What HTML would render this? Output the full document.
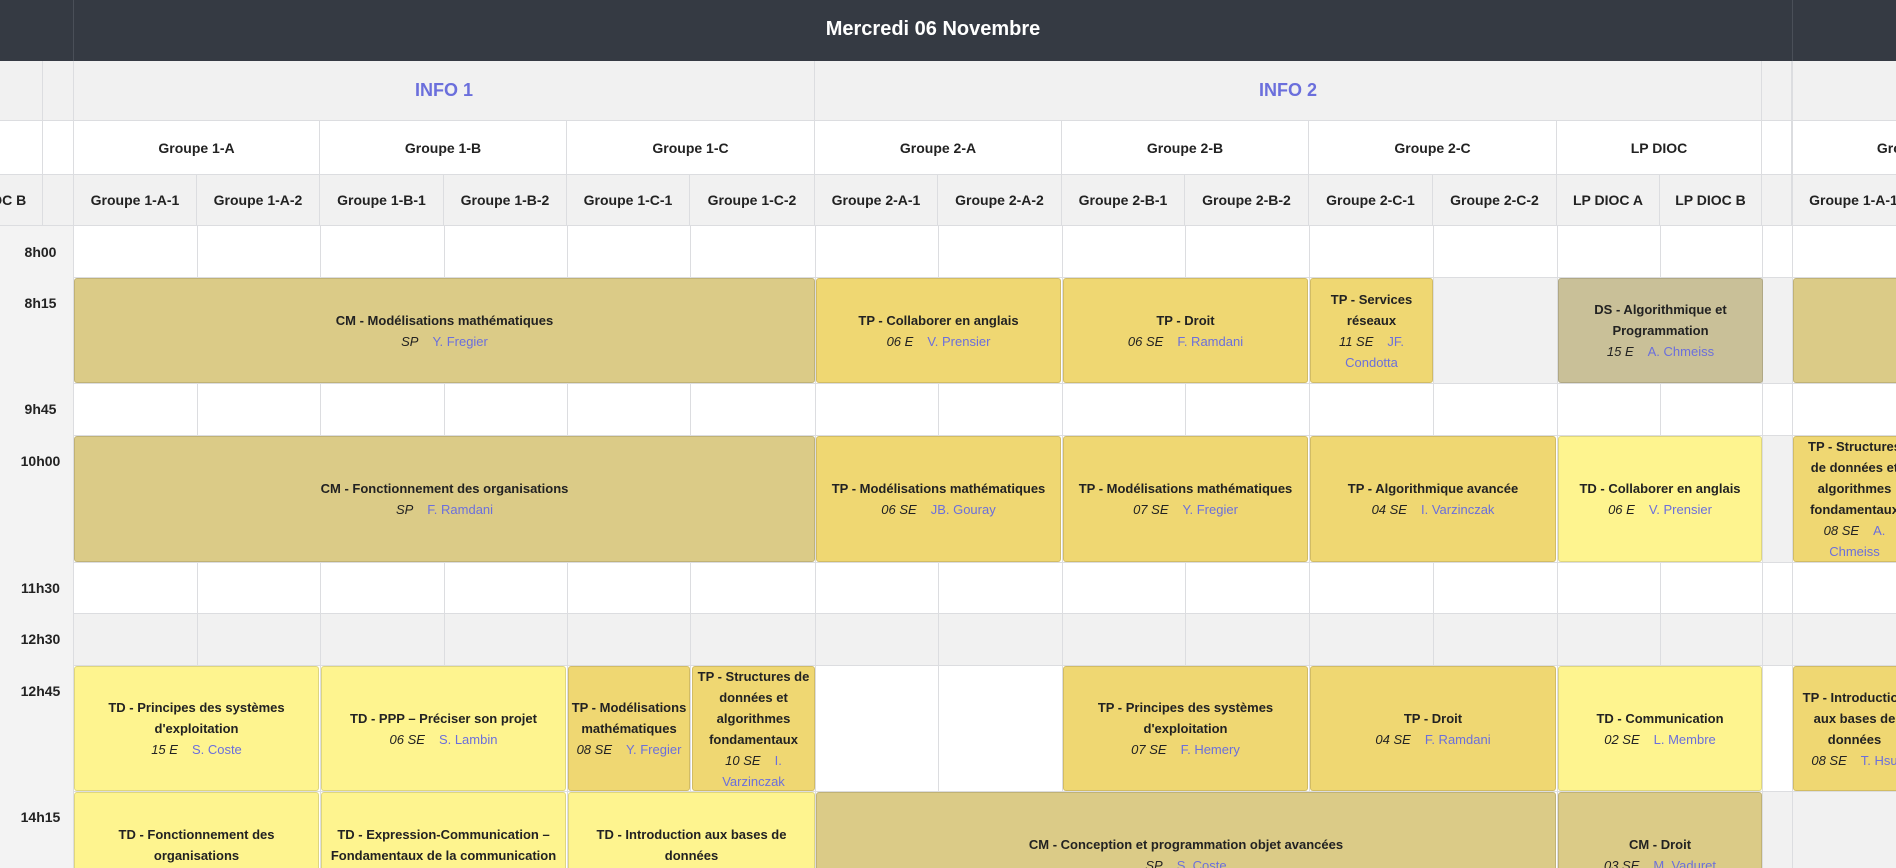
<!DOCTYPE html>
<html><head><meta charset="utf-8">
<style>
*{box-sizing:border-box;margin:0;padding:0}
html{width:1896px;height:868px;overflow:hidden}
body{width:1896px;height:868px;overflow:hidden;position:relative;background:#fff;font-family:"Liberation Sans",Arial,sans-serif;color:#222}
#clip{position:absolute;left:0;top:0;width:1896px;height:868px;overflow:hidden}
.a{position:absolute}
.hd{background:#353a43}
.g{background:#f1f1f1}
.w{background:#fff}
.c{position:absolute;border-right:1px solid #dcdde0;border-bottom:1px solid #dcdde0;display:flex;align-items:center;justify-content:center;font-weight:bold;font-size:14px;white-space:nowrap;overflow:hidden}
.t{position:absolute;left:0;width:73px;background:#f3f3f3;font-weight:bold;font-size:14px;text-align:center;padding-left:8px;line-height:52px}
.ev{position:absolute;border:1px solid rgba(0,0,0,.12);border-radius:3px;display:flex;flex-direction:column;align-items:center;justify-content:center;text-align:center;font-size:13px;line-height:21px;padding:0 2px;overflow:hidden}
.ev b{font-weight:bold;color:#222}
.ev i{font-style:italic;margin-right:14px}
.ev span{color:#6b6fdc}
.CM{background:#dbcb87}
.TP{background:#efd772}
.TD{background:#fef48f}
.DS{background:#c9c098}
</style></head><body><div id="clip">
<div class="a hd" style="left:0;top:0;width:1896px;height:61px"></div>
<div class="a" style="left:73px;top:0;width:1px;height:61px;background:#4a4f58"></div>
<div class="a" style="left:1792px;top:0;width:1px;height:61px;background:#4a4f58"></div>
<div class="a" style="left:74px;top:0;width:1718px;height:61px;line-height:58px;text-align:center;color:#fff;font-weight:bold;font-size:20px">Mercredi 06 Novembre</div>

<div class="c g" style="left:0;top:61px;width:43px;height:60px"></div>
<div class="c g" style="left:43px;top:61px;width:31px;height:60px"></div>
<div class="c g" style="left:74px;top:61px;width:741px;height:60px;color:#6b6fdc;font-size:18px">INFO 1</div>
<div class="c g" style="left:815px;top:61px;width:947px;height:60px;color:#6b6fdc;font-size:18px">INFO 2</div>
<div class="c g" style="left:1762px;top:61px;width:30px;height:60px"></div>
<div class="c g" style="left:1792px;top:61px;width:104px;height:60px;border-left:1px solid #dcdde0;border-right:none"></div>

<div class="c w" style="left:0;top:121px;width:43px;height:54px"></div>
<div class="c w" style="left:43px;top:121px;width:31px;height:54px"></div>
<div class="c w" style="left:74px;top:121px;width:246px;height:54px">Groupe 1-A</div>
<div class="c w" style="left:320px;top:121px;width:247px;height:54px">Groupe 1-B</div>
<div class="c w" style="left:567px;top:121px;width:248px;height:54px">Groupe 1-C</div>
<div class="c w" style="left:815px;top:121px;width:247px;height:54px">Groupe 2-A</div>
<div class="c w" style="left:1062px;top:121px;width:247px;height:54px">Groupe 2-B</div>
<div class="c w" style="left:1309px;top:121px;width:248px;height:54px">Groupe 2-C</div>
<div class="c w" style="left:1557px;top:121px;width:205px;height:54px">LP DIOC</div>
<div class="c w" style="left:1762px;top:121px;width:30px;height:54px"></div>
<div class="c w" style="left:1792px;top:121px;width:246px;height:54px;border-left:1px solid #dcdde0">Groupe 1-A</div>

<div class="c g" style="left:-60px;top:175px;width:103px;height:51px">LP DIOC B</div>
<div class="c g" style="left:43px;top:175px;width:31px;height:51px"></div>
<div class="c g" style="left:74px;top:175px;width:123px;height:51px">Groupe 1-A-1</div>
<div class="c g" style="left:197px;top:175px;width:123px;height:51px">Groupe 1-A-2</div>
<div class="c g" style="left:320px;top:175px;width:124px;height:51px">Groupe 1-B-1</div>
<div class="c g" style="left:444px;top:175px;width:123px;height:51px">Groupe 1-B-2</div>
<div class="c g" style="left:567px;top:175px;width:123px;height:51px">Groupe 1-C-1</div>
<div class="c g" style="left:690px;top:175px;width:125px;height:51px">Groupe 1-C-2</div>
<div class="c g" style="left:815px;top:175px;width:123px;height:51px">Groupe 2-A-1</div>
<div class="c g" style="left:938px;top:175px;width:124px;height:51px">Groupe 2-A-2</div>
<div class="c g" style="left:1062px;top:175px;width:123px;height:51px">Groupe 2-B-1</div>
<div class="c g" style="left:1185px;top:175px;width:124px;height:51px">Groupe 2-B-2</div>
<div class="c g" style="left:1309px;top:175px;width:124px;height:51px">Groupe 2-C-1</div>
<div class="c g" style="left:1433px;top:175px;width:124px;height:51px">Groupe 2-C-2</div>
<div class="c g" style="left:1557px;top:175px;width:103px;height:51px">LP DIOC A</div>
<div class="c g" style="left:1660px;top:175px;width:102px;height:51px">LP DIOC B</div>
<div class="c g" style="left:1762px;top:175px;width:30px;height:51px"></div>
<div class="c g" style="left:1792px;top:175px;width:123px;height:51px;border-left:1px solid #dcdde0">Groupe 1-A-1</div>
<div class="c g" style="left:1915px;top:175px;width:123px;height:51px"></div>

<svg class="a" style="left:73px;top:226px" width="1823" height="642">
<rect x="0" y="0" width="1823" height="642" fill="#fff"/>
<rect x="0" y="387" width="1823" height="52" fill="#f1f1f1"/>
<rect x="1689" y="51" width="30" height="106" fill="#f1f1f1"/>
<rect x="1689" y="209" width="30" height="127" fill="#f1f1f1"/>
<rect x="1689" y="565" width="134" height="80" fill="#f1f1f1"/>
<rect x="1360" y="52" width="124" height="106" fill="#f1f1f1"/>
<g stroke="#dcdde0" stroke-width="1">
<path d="M0.5 0V642M124.5 0V642M247.5 0V642M371.5 0V642M494.5 0V642M617.5 0V642M742.5 0V642M865.5 0V642M989.5 0V642M1112.5 0V642M1236.5 0V642M1360.5 0V642M1484.5 0V642M1587.5 0V642M1689.5 0V642M1719.5 0V642M1842.5 0V642"/>
<path d="M0 51.5H1823M0 157.5H1823M0 209.5H1823M0 336.5H1823M0 387.5H1823M0 439.5H1823M0 565.5H1823"/>
</g>
</svg>

<div class="t" style="top:226px;height:51px">8h00</div>
<div class="t" style="top:277px;height:106px">8h15</div>
<div class="t" style="top:383px;height:52px">9h45</div>
<div class="t" style="top:435px;height:127px">10h00</div>
<div class="t" style="top:562px;height:51px">11h30</div>
<div class="t" style="top:613px;height:52px">12h30</div>
<div class="t" style="top:665px;height:126px">12h45</div>
<div class="t" style="top:791px;height:77px">14h15</div>

<div class="ev CM" style="left:74px;top:278px;width:741px;height:105px"><b>CM - Modélisations mathématiques</b><div><i>SP</i><span>Y. Fregier</span></div></div>
<div class="ev TP" style="left:816px;top:278px;width:245px;height:105px"><b>TP - Collaborer en anglais</b><div><i>06 E</i><span>V. Prensier</span></div></div>
<div class="ev TP" style="left:1063px;top:278px;width:245px;height:105px"><b>TP - Droit</b><div><i>06 SE</i><span>F. Ramdani</span></div></div>
<div class="ev TP" style="left:1310px;top:278px;width:123px;height:105px;padding:0 10px"><b>TP - Services réseaux</b><div><i>11 SE</i><span>JF. Condotta</span></div></div>
<div class="ev DS" style="left:1558px;top:278px;width:205px;height:105px;padding:0 20px"><b>DS - Algorithmique et Programmation</b><div><i>15 E</i><span>A. Chmeiss</span></div></div>
<div class="ev CM" style="left:1793px;top:278px;width:200px;height:105px"></div>

<div class="ev CM" style="left:74px;top:436px;width:741px;height:126px"><b>CM - Fonctionnement des organisations</b><div><i>SP</i><span>F. Ramdani</span></div></div>
<div class="ev TP" style="left:816px;top:436px;width:245px;height:126px"><b>TP - Modélisations mathématiques</b><div><i>06 SE</i><span>JB. Gouray</span></div></div>
<div class="ev TP" style="left:1063px;top:436px;width:245px;height:126px"><b>TP - Modélisations mathématiques</b><div><i>07 SE</i><span>Y. Fregier</span></div></div>
<div class="ev TP" style="left:1310px;top:436px;width:246px;height:126px"><b>TP - Algorithmique avancée</b><div><i>04 SE</i><span>I. Varzinczak</span></div></div>
<div class="ev TD" style="left:1558px;top:436px;width:204px;height:126px"><b>TD - Collaborer en anglais</b><div><i>06 E</i><span>V. Prensier</span></div></div>
<div class="ev TP" style="left:1793px;top:436px;width:123px;height:126px;padding:0 10px"><b>TP - Structures de données et algorithmes fondamentaux</b><div><i>08 SE</i><span>A. Chmeiss</span></div></div>

<div class="ev TD" style="left:74px;top:666px;width:245px;height:125px;padding:0 20px"><b>TD - Principes des systèmes d'exploitation</b><div><i>15 E</i><span>S. Coste</span></div></div>
<div class="ev TD" style="left:321px;top:666px;width:245px;height:125px"><b>TD - PPP – Préciser son projet</b><div><i>06 SE</i><span>S. Lambin</span></div></div>
<div class="ev TP" style="left:568px;top:666px;width:122px;height:125px;padding:0"><b>TP - Modélisations mathématiques</b><div><i>08 SE</i><span>Y. Fregier</span></div></div>
<div class="ev TP" style="left:692px;top:666px;width:123px;height:125px;padding:0"><b>TP - Structures de données et algorithmes fondamentaux</b><div><i>10 SE</i><span>I. Varzinczak</span></div></div>
<div class="ev TP" style="left:1063px;top:666px;width:245px;height:125px;padding:0 20px"><b>TP - Principes des systèmes d'exploitation</b><div><i>07 SE</i><span>F. Hemery</span></div></div>
<div class="ev TP" style="left:1310px;top:666px;width:246px;height:125px"><b>TP - Droit</b><div><i>04 SE</i><span>F. Ramdani</span></div></div>
<div class="ev TD" style="left:1558px;top:666px;width:204px;height:125px"><b>TD - Communication</b><div><i>02 SE</i><span>L. Membre</span></div></div>
<div class="ev TP" style="left:1793px;top:666px;width:123px;height:125px;padding:0 4px"><b>TP - Introduction aux bases de données</b><div><i>08 SE</i><span>T. Hsu</span></div></div>

<div class="ev TD" style="left:74px;top:792px;width:245px;height:126px;padding:0 30px"><b>TD - Fonctionnement des organisations</b><div><i>06 SE</i><span>S. Coste</span></div></div>
<div class="ev TD" style="left:321px;top:792px;width:245px;height:126px;padding:0"><b>TD - Expression-Communication – Fondamentaux de la communication</b><div><i>06 SE</i><span>S. Lambin</span></div></div>
<div class="ev TD" style="left:568px;top:792px;width:247px;height:126px;padding:0 10px"><b>TD - Introduction aux bases de données</b><div><i>08 SE</i><span>T. Hsu</span></div></div>
<div class="ev CM" style="left:816px;top:792px;width:740px;height:126px"><b>CM - Conception et programmation objet avancées</b><div><i>SP</i><span>S. Coste</span></div></div>
<div class="ev CM" style="left:1558px;top:792px;width:204px;height:126px"><b>CM - Droit</b><div><i>03 SE</i><span>M. Vaduret</span></div></div>
</div></body></html>
